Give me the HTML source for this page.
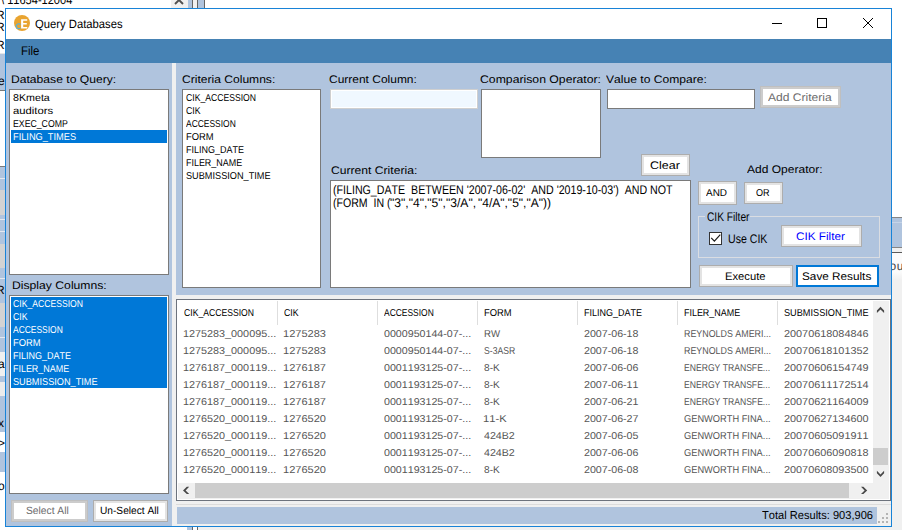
<!DOCTYPE html>
<html><head><meta charset="utf-8"><title>Query Databases</title>
<style>
*{box-sizing:border-box;margin:0;padding:0}
html,body{width:902px;height:530px;overflow:hidden;background:#fff}
body{position:relative;font-family:"Liberation Sans",sans-serif;font-kerning:none;text-rendering:geometricPrecision}
.a{position:absolute}
.t{position:absolute;white-space:pre;line-height:16px;height:16px;transform-origin:0 50%}
.lb{position:absolute;background:#fff;border:1px solid #7a7a7a}
.sel{position:absolute;background:#0078d7}
.btn{position:absolute;background:#fff;border:1px solid #adadad;box-shadow:inset 0 0 0 2px #e3e3e3}
.btn.dis{border-color:#bfbfbf;box-shadow:inset 0 0 0 2px #cccccc}
.btn.def{border:2px solid #0078d7;box-shadow:none}
</style></head><body>

<!-- ===== background application fragments ===== -->
<div class="a" style="left:0;top:0;width:902px;height:8px;background:#fff"></div>
<div class="a" style="left:171px;top:0;width:17px;height:8px;background:#f0f0f0"></div>
<svg class="a" style="left:174px;top:-1px" width="10" height="6" viewBox="0 0 10 6"><path d="M1 5 L5 1 L9 5" fill="none" stroke="#505050" stroke-width="1.9"/></svg>
<div class="a" style="left:188px;top:0;width:5px;height:8px;background:#b0c4de;border-right:1px solid #646464"></div>
<div class="a" style="left:193px;top:0;width:5px;height:8px;background:#f0f0f0;border-right:1px solid #646464"></div>
<div class="a" style="left:198px;top:0;width:7px;height:8px;background:#b0c4de;border-right:1px solid #646464"></div>
<!-- left strip -->
<div class="a" id="lstrip" style="left:0;top:8px;width:5px;height:519px;background:linear-gradient(to bottom,#fff 0px,#fff 45px,#e6e6e6 45px,#e6e6e6 46px,#b0c4de 46px,#b0c4de 82px,#7a7a7a 82px,#7a7a7a 83px,#fff 83px,#fff 158px,#7a7a7a 158px,#7a7a7a 159px,#b0c4de 159px,#b0c4de 170px,#e4e8f0 170px,#e4e8f0 171px,#b0c4de 171px,#b0c4de 182px,#d3d3d3 182px,#d3d3d3 207px,#b0c4de 207px,#b0c4de 211px,#e4e8f0 211px,#e4e8f0 212px,#b0c4de 212px,#b0c4de 223px,#e4e8f0 223px,#e4e8f0 224px,#b0c4de 224px,#b0c4de 236px,#d3d3d3 236px,#d3d3d3 260px,#b0c4de 260px,#b0c4de 270px,#e4e8f0 270px,#e4e8f0 271px,#b0c4de 271px,#b0c4de 295px,#d3d3d3 295px,#d3d3d3 319px,#b0c4de 319px,#b0c4de 329px,#e4e8f0 329px,#e4e8f0 330px,#b0c4de 330px,#b0c4de 344px,#f0f0f0 344px,#f0f0f0 368px,#b0c4de 368px,#b0c4de 374px,#ececec 374px,#ececec 388px,#b0c4de 388px,#b0c4de 424px,#fff 424px,#fff 444px,#b0c4de 444px,#b0c4de 464px,#fff 464px,#fff 519px)"></div>
<span class="t" style="left:-4px;top:7px;font-size:12px">R</span>
<span class="t" style="left:-4px;top:19px;font-size:12px">R</span>
<span class="t" style="left:-4px;top:37px;font-size:12px">R</span>
<span class="t" style="left:-2px;top:73px;font-size:12px">e</span>
<span class="t" style="left:-4px;top:282px;font-size:12px">R</span>
<span class="t" style="left:-2px;top:356px;font-size:12px">a</span>
<span class="t" style="left:-2px;top:415px;font-size:12px">x</span>
<span class="t" style="left:-2px;top:435px;font-size:12px">&gt;</span>
<span class="t" style="left:-2px;top:478px;font-size:12px">o</span>
<!-- right strip -->
<div class="a" style="left:892px;top:8px;width:10px;height:522px;background:linear-gradient(to bottom,
#fff 0,#fff 209px,#858585 209px,#858585 210px,#b0c4de 210px,#b0c4de 214px,#c6d4e8 214px,#c6d4e8 215px,#b0c4de 215px,#b0c4de 239px,#858585 239px,#858585 240px,#f0f0f0 240px,#f0f0f0 244px,#5a5a5a 244px,#5a5a5a 245px,#fbfbfb 245px,#fbfbfb 264px,#f0f0f0 272px,#f0f0f0 522px)"></div>
<span class="t" style="left:889.5px;top:258px;font-size:12px;color:#444;letter-spacing:0.5px">ou</span>
<!-- bottom strip -->
<div class="a" style="left:0;top:527px;width:902px;height:3px;background:#fff"></div>
<div class="a" style="left:198px;top:527px;width:704px;height:3px;background:#f0f0f0"></div>
<div class="a" style="left:187px;top:527px;width:6px;height:3px;background:#b0c4de;border-right:1px solid #646464"></div>
<div class="a" style="left:197px;top:527px;width:1px;height:3px;background:#646464"></div>

<!-- ===== window ===== -->
<div class="a" style="left:5px;top:8px;width:887px;height:519px;border:1px solid #1883d7;background:#b0c4de"></div>
<div class="a" style="left:6px;top:9px;width:885px;height:30px;background:#fff"></div>
<div class="a" style="left:6px;top:39px;width:885px;height:24px;background:#4682b4"></div>
<!-- icon -->
<svg class="a" style="left:14px;top:15px" width="16" height="16" viewBox="0 0 16 16">
<circle cx="8" cy="8" r="8" fill="#e9a430"/>
<path d="M7.1 4.2h6.1v1.6H9.2v2.2h3.6v1.5H9.2v2.5h4.1v1.6H7.1z" fill="#fff"/>
<path d="M6.4 9.6a2.3 2.4 0 1 0 0 3.2" fill="none" stroke="#4fb3e6" stroke-width="1.1"/>
</svg>
<!-- caption buttons -->
<svg class="a" style="left:760px;top:9px" width="131" height="30" viewBox="0 0 131 30" shape-rendering="crispEdges">
<path d="M12 14.5h10" stroke="#000" stroke-width="1"/>
<rect x="57.5" y="9.5" width="9" height="9" fill="none" stroke="#000" stroke-width="1"/>
<path d="M103 9 L113 19 M113 9 L103 19" stroke="#000" stroke-width="1" shape-rendering="geometricPrecision"/>
</svg>

<!-- splitters -->
<div class="a" style="left:172px;top:63px;width:4px;height:463px;background:#f0f0f0"></div>
<div class="a" style="left:176px;top:295px;width:715px;height:4px;background:#f0f0f0"></div>
<div class="a" style="left:176px;top:501px;width:715px;height:25px;background:#f0f0f0"></div>

<!-- left panel -->
<div class="lb" style="left:9px;top:89px;width:160px;height:186px"></div>
<div class="sel" style="left:11px;top:130px;width:156px;height:13px"></div>
<div class="lb" style="left:9px;top:295px;width:160px;height:199px"></div>
<div class="sel" style="left:11px;top:297px;width:156px;height:91px"></div>
<div class="btn dis" style="left:11px;top:500px;width:77px;height:22px"></div>
<div class="btn" style="left:93px;top:500px;width:75px;height:22px"></div>

<!-- top right panel -->
<div class="lb" style="left:182px;top:89px;width:139px;height:199px"></div>
<div class="a" style="left:330px;top:89px;width:148px;height:20px;background:#f0f8ff;border:1px solid #cfcfcf;box-shadow:inset 0 0 0 1px #fff"></div>
<div class="lb" style="left:481px;top:89px;width:120px;height:69px"></div>
<div class="lb" style="left:607px;top:89px;width:148px;height:20px"></div>
<div class="btn dis" style="left:760px;top:86px;width:81px;height:22px"></div>
<div class="btn" style="left:641px;top:154px;width:49px;height:22px"></div>
<div class="lb" style="left:330px;top:180px;width:361px;height:108px"></div>
<div class="btn" style="left:698px;top:181px;width:39px;height:24px"></div>
<div class="btn" style="left:744px;top:182px;width:39px;height:22px"></div>
<!-- group box -->
<div class="a" style="left:698px;top:216px;width:182px;height:42px;border:1px solid #dadde2"></div>
<div class="a" style="left:705px;top:214px;width:45px;height:5px;background:#b0c4de"></div>
<div class="a" style="left:709px;top:232px;width:13px;height:13px;background:#fff;border:1px solid #333"></div>
<svg class="a" style="left:709px;top:232px" width="13" height="13" viewBox="0 0 13 13"><path d="M2.2 5.8 L5.4 9.2 L11.3 2.6" fill="none" stroke="#1a1a1a" stroke-width="1.2"/></svg>
<div class="btn" style="left:781px;top:225px;width:81px;height:22px"></div>
<div class="btn" style="left:699px;top:265px;width:94px;height:22px"></div>
<div class="btn def" style="left:796px;top:265px;width:83px;height:22px"></div>

<!-- data grid -->
<div class="lb" style="left:176px;top:299px;width:715px;height:202px;border-color:#6d737d"></div>
<div class="a" style="left:277px;top:301px;width:1px;height:24px;background:#dedede"></div>
<div class="a" style="left:377px;top:301px;width:1px;height:24px;background:#dedede"></div>
<div class="a" style="left:477px;top:301px;width:1px;height:24px;background:#dedede"></div>
<div class="a" style="left:577px;top:301px;width:1px;height:24px;background:#dedede"></div>
<div class="a" style="left:677px;top:301px;width:1px;height:24px;background:#dedede"></div>
<div class="a" style="left:777px;top:301px;width:1px;height:24px;background:#dedede"></div>
<!-- v scrollbar -->
<div class="a" style="left:873px;top:301px;width:16px;height:198px;background:#f0f0f0"></div>
<div class="a" style="left:873px;top:448px;width:15px;height:17px;background:#cdcdcd"></div>
<!-- h scrollbar -->
<div class="a" style="left:178px;top:483px;width:695px;height:16px;background:#f0f0f0"></div>
<div class="a" style="left:195px;top:483px;width:654px;height:15px;background:#cdcdcd"></div>
<svg class="a" style="left:0;top:0" width="902" height="530" viewBox="0 0 902 530"><g fill="#484848">
<polygon points="880.5,306.8 884.1,310.6 884.1,313 880.5,309.4 876.9,313 876.9,310.6"/>
<polygon points="880.5,477 884.1,473.2 884.1,470.8 880.5,474.4 876.9,470.8 876.9,473.2"/>
<polygon points="183,490.4 186.8,486.8 189.2,486.8 185.6,490.4 189.2,494 186.8,494"/>
<polygon points="867.2,490.4 863.4,486.8 861,486.8 864.6,490.4 861,494 863.4,494"/>
</g></svg>

<!-- status bar -->
<div class="a" style="left:176px;top:504px;width:715px;height:1px;background:#dcdcdc"></div>
<div class="a" style="left:177px;top:507px;width:700px;height:17px;background:#b0c4de"></div>
<svg class="a" style="left:878px;top:512px" width="12" height="12" viewBox="0 0 12 12" shape-rendering="crispEdges">
<g fill="#b4b4b4"><rect x="8" y="1" width="2" height="2"/><rect x="8" y="5" width="2" height="2"/><rect x="4" y="5" width="2" height="2"/><rect x="8" y="9" width="2" height="2"/><rect x="4" y="9" width="2" height="2"/><rect x="0" y="9" width="2" height="2"/></g></svg>

<!-- ===== text ===== -->
<span class="t" id="t0" style="left:1.45px;top:-8px;font-size:12px;transform:scaleX(0.9211);">\ 11654-12004</span>
<span class="t" id="t1" style="left:34.84px;top:16px;font-size:12px;transform:scaleX(0.9376);">Query Databases</span>
<span class="t" id="t2" style="left:21.05px;top:43px;font-size:12.5px;transform:scaleX(0.9158);">File</span>
<span class="t" id="t3" style="left:10.94px;top:72px;font-size:11px;transform:scaleX(1.1021);">Database to Query:</span>
<span class="t" id="t4" style="left:181.64px;top:72px;font-size:11px;transform:scaleX(1.0976);">Criteria Columns:</span>
<span class="t" id="t5" style="left:329.35px;top:72px;font-size:11px;transform:scaleX(1.0886);">Current Column:</span>
<span class="t" id="t6" style="left:480.33px;top:72px;font-size:11px;transform:scaleX(1.1121);">Comparison Operator:</span>
<span class="t" id="t7" style="left:606.34px;top:72px;font-size:11px;transform:scaleX(1.1000);">Value to Compare:</span>
<span class="t" id="t8" style="left:330.64px;top:163px;font-size:11px;transform:scaleX(1.1026);">Current Criteria:</span>
<span class="t" id="t9" style="left:747.14px;top:162px;font-size:11px;transform:scaleX(1.0926);">Add Operator:</span>
<span class="t" id="t10" style="left:11.94px;top:278px;font-size:11px;transform:scaleX(1.1071);">Display Columns:</span>
<span class="t" id="t11" style="left:12.56px;top:91px;font-size:10px;transform:scaleX(1.0676);">8Kmeta</span>
<span class="t" id="t12" style="left:12.52px;top:104px;font-size:10px;transform:scaleX(1.1257);">auditors</span>
<span class="t" id="t13" style="left:12.68px;top:117px;font-size:10px;transform:scaleX(0.8726);">EXEC_COMP</span>
<span class="t" id="t14" style="left:12.65px;top:130px;font-size:10px;color:#fff;transform:scaleX(0.9224);">FILING_TIMES</span>
<span class="t" id="t15" style="left:185.68px;top:91px;font-size:10px;transform:scaleX(0.8625);">CIK_ACCESSION</span>
<span class="t" id="t16" style="left:185.67px;top:104px;font-size:10px;transform:scaleX(0.8750);">CIK</span>
<span class="t" id="t17" style="left:185.69px;top:117px;font-size:10px;transform:scaleX(0.8448);">ACCESSION</span>
<span class="t" id="t18" style="left:185.64px;top:130px;font-size:10px;transform:scaleX(0.9393);">FORM</span>
<span class="t" id="t19" style="left:185.66px;top:143px;font-size:10px;transform:scaleX(0.8984);">FILING_DATE</span>
<span class="t" id="t20" style="left:185.66px;top:156px;font-size:10px;transform:scaleX(0.8935);">FILER_NAME</span>
<span class="t" id="t21" style="left:185.65px;top:169px;font-size:10px;transform:scaleX(0.9176);">SUBMISSION_TIME</span>
<span class="t" id="t22" style="left:13.28px;top:297px;font-size:10px;color:#fff;transform:scaleX(0.8625);">CIK_ACCESSION</span>
<span class="t" id="t23" style="left:13.28px;top:310px;font-size:10px;color:#fff;transform:scaleX(0.8750);">CIK</span>
<span class="t" id="t24" style="left:13.29px;top:323px;font-size:10px;color:#fff;transform:scaleX(0.8448);">ACCESSION</span>
<span class="t" id="t25" style="left:13.24px;top:336px;font-size:10px;color:#fff;transform:scaleX(0.9393);">FORM</span>
<span class="t" id="t26" style="left:13.26px;top:349px;font-size:10px;color:#fff;transform:scaleX(0.8984);">FILING_DATE</span>
<span class="t" id="t27" style="left:13.26px;top:362px;font-size:10px;color:#fff;transform:scaleX(0.8935);">FILER_NAME</span>
<span class="t" id="t28" style="left:13.25px;top:375px;font-size:10px;color:#fff;transform:scaleX(0.9176);">SUBMISSION_TIME</span>
<span class="t" id="t29" style="left:768.14px;top:90px;font-size:11px;color:#6d6d6d;transform:scaleX(1.0965);">Add Criteria</span>
<span class="t" id="t30" style="left:650.22px;top:158px;font-size:11px;transform:scaleX(1.1360);">Clear</span>
<span class="t" id="t31" style="left:706.40px;top:186px;font-size:10px;transform:scaleX(0.9950);">AND</span>
<span class="t" id="t32" style="left:755.56px;top:186px;font-size:10px;transform:scaleX(0.9071);">OR</span>
<span class="t" id="t33" style="left:796.36px;top:229px;font-size:11px;color:#0000ff;transform:scaleX(1.0667);">CIK Filter</span>
<span class="t" id="t34" style="left:724.89px;top:269px;font-size:11px;transform:scaleX(1.0205);">Execute</span>
<span class="t" id="t35" style="left:801.56px;top:269px;font-size:11px;transform:scaleX(1.0687);">Save Results</span>
<span class="t" id="t36" style="left:26.41px;top:503px;font-size:10.5px;color:#6d6d6d;transform:scaleX(0.9767);">Select All</span>
<span class="t" id="t37" style="left:99.92px;top:503px;font-size:10.5px;transform:scaleX(0.9667);">Un-Select All</span>
<span class="t" id="t38" style="left:706.91px;top:209px;font-size:12.5px;transform:scaleX(0.8157);">CIK Filter</span>
<span class="t" id="t39" style="left:728.29px;top:231px;font-size:12.5px;transform:scaleX(0.8467);">Use CIK</span>
<span class="t" id="t40" style="left:332.89px;top:182px;font-size:12.5px;transform:scaleX(0.8520);">(FILING_DATE  BETWEEN &#x27;2007-06-02&#x27;  AND &#x27;2019-10-03&#x27;)  AND NOT</span>
<span class="t" id="t41" style="left:332.79px;top:195px;font-size:12.5px;transform:scaleX(0.8448);">(FORM  IN (</span>
<span class="t" id="t42" style="left:389.92px;top:195px;font-size:12.5px;transform:scaleX(0.9667);">&quot;3&quot;,&quot;4&quot;,&quot;5&quot;,&quot;3/A&quot;,</span>
<span class="t" id="t43" style="left:478.02px;top:195px;font-size:12.5px;transform:scaleX(0.9600);">&quot;4/A&quot;,&quot;5&quot;,&quot;A&quot;))</span>
<span class="t" id="t44" style="left:761.92px;top:508px;font-size:11.5px;transform:scaleX(0.9649);">Total Results: 903,906</span>
<span class="t" id="t45" style="left:183.78px;top:306px;font-size:10px;transform:scaleX(0.8625);">CIK_ACCESSION</span>
<span class="t" id="t46" style="left:283.78px;top:306px;font-size:10px;transform:scaleX(0.8750);">CIK</span>
<span class="t" id="t47" style="left:383.79px;top:306px;font-size:10px;transform:scaleX(0.8448);">ACCESSION</span>
<span class="t" id="t48" style="left:483.74px;top:306px;font-size:10px;transform:scaleX(0.9393);">FORM</span>
<span class="t" id="t49" style="left:583.76px;top:306px;font-size:10px;transform:scaleX(0.8984);">FILING_DATE</span>
<span class="t" id="t50" style="left:683.76px;top:306px;font-size:10px;transform:scaleX(0.8935);">FILER_NAME</span>
<span class="t" id="t51" style="left:783.75px;top:306px;font-size:10px;transform:scaleX(0.9176);">SUBMISSION_TIME</span>
<span class="t" id="t52" style="left:182.57px;top:327px;font-size:10px;color:#555;transform:scaleX(1.0810);">1275283_000095...</span>
<span class="t" id="t53" style="left:282.54px;top:327px;font-size:10px;color:#555;transform:scaleX(1.1027);">1275283</span>
<span class="t" id="t54" style="left:383.66px;top:327px;font-size:10px;color:#555;transform:scaleX(1.0663);">0000950144-07-...</span>
<span class="t" id="t55" style="left:483.72px;top:327px;font-size:10px;color:#555;transform:scaleX(0.9625);">RW</span>
<span class="t" id="t56" style="left:583.66px;top:327px;font-size:10px;color:#555;transform:scaleX(1.0640);">2007-06-18</span>
<span class="t" id="t57" style="left:683.77px;top:327px;font-size:10px;color:#555;transform:scaleX(0.8885);">REYNOLDS AMERI...</span>
<span class="t" id="t58" style="left:783.65px;top:327px;font-size:10px;color:#555;transform:scaleX(1.0857);">20070618084846</span>
<span class="t" id="t59" style="left:182.57px;top:344px;font-size:10px;color:#555;transform:scaleX(1.0810);">1275283_000095...</span>
<span class="t" id="t60" style="left:282.54px;top:344px;font-size:10px;color:#555;transform:scaleX(1.1027);">1275283</span>
<span class="t" id="t61" style="left:383.66px;top:344px;font-size:10px;color:#555;transform:scaleX(1.0663);">0000950144-07-...</span>
<span class="t" id="t62" style="left:483.78px;top:344px;font-size:10px;color:#555;transform:scaleX(0.8657);">S-3ASR</span>
<span class="t" id="t63" style="left:583.66px;top:344px;font-size:10px;color:#555;transform:scaleX(1.0640);">2007-06-18</span>
<span class="t" id="t64" style="left:683.77px;top:344px;font-size:10px;color:#555;transform:scaleX(0.8885);">REYNOLDS AMERI...</span>
<span class="t" id="t65" style="left:783.65px;top:344px;font-size:10px;color:#555;transform:scaleX(1.0857);">20070618101352</span>
<span class="t" id="t66" style="left:182.57px;top:361px;font-size:10px;color:#555;transform:scaleX(1.0810);">1276187_000119...</span>
<span class="t" id="t67" style="left:282.54px;top:361px;font-size:10px;color:#555;transform:scaleX(1.1027);">1276187</span>
<span class="t" id="t68" style="left:383.66px;top:361px;font-size:10px;color:#555;transform:scaleX(1.0663);">0001193125-07-...</span>
<span class="t" id="t69" style="left:483.69px;top:361px;font-size:10px;color:#555;transform:scaleX(1.0133);">8-K</span>
<span class="t" id="t70" style="left:583.66px;top:361px;font-size:10px;color:#555;transform:scaleX(1.0640);">2007-06-06</span>
<span class="t" id="t71" style="left:683.78px;top:361px;font-size:10px;color:#555;transform:scaleX(0.8602);">ENERGY TRANSFE...</span>
<span class="t" id="t72" style="left:783.65px;top:361px;font-size:10px;color:#555;transform:scaleX(1.0857);">20070606154749</span>
<span class="t" id="t73" style="left:182.57px;top:378px;font-size:10px;color:#555;transform:scaleX(1.0810);">1276187_000119...</span>
<span class="t" id="t74" style="left:282.54px;top:378px;font-size:10px;color:#555;transform:scaleX(1.1027);">1276187</span>
<span class="t" id="t75" style="left:383.66px;top:378px;font-size:10px;color:#555;transform:scaleX(1.0663);">0001193125-07-...</span>
<span class="t" id="t76" style="left:483.69px;top:378px;font-size:10px;color:#555;transform:scaleX(1.0133);">8-K</span>
<span class="t" id="t77" style="left:583.66px;top:378px;font-size:10px;color:#555;transform:scaleX(1.0640);">2007-06-11</span>
<span class="t" id="t78" style="left:683.78px;top:378px;font-size:10px;color:#555;transform:scaleX(0.8602);">ENERGY TRANSFE...</span>
<span class="t" id="t79" style="left:783.65px;top:378px;font-size:10px;color:#555;transform:scaleX(1.0857);">20070611172514</span>
<span class="t" id="t80" style="left:182.57px;top:395px;font-size:10px;color:#555;transform:scaleX(1.0810);">1276187_000119...</span>
<span class="t" id="t81" style="left:282.54px;top:395px;font-size:10px;color:#555;transform:scaleX(1.1027);">1276187</span>
<span class="t" id="t82" style="left:383.66px;top:395px;font-size:10px;color:#555;transform:scaleX(1.0663);">0001193125-07-...</span>
<span class="t" id="t83" style="left:483.69px;top:395px;font-size:10px;color:#555;transform:scaleX(1.0133);">8-K</span>
<span class="t" id="t84" style="left:583.66px;top:395px;font-size:10px;color:#555;transform:scaleX(1.0640);">2007-06-21</span>
<span class="t" id="t85" style="left:683.78px;top:395px;font-size:10px;color:#555;transform:scaleX(0.8602);">ENERGY TRANSFE...</span>
<span class="t" id="t86" style="left:783.65px;top:395px;font-size:10px;color:#555;transform:scaleX(1.0857);">20070621164009</span>
<span class="t" id="t87" style="left:182.57px;top:412px;font-size:10px;color:#555;transform:scaleX(1.0810);">1276520_000119...</span>
<span class="t" id="t88" style="left:282.54px;top:412px;font-size:10px;color:#555;transform:scaleX(1.1027);">1276520</span>
<span class="t" id="t89" style="left:383.66px;top:412px;font-size:10px;color:#555;transform:scaleX(1.0663);">0001193125-07-...</span>
<span class="t" id="t90" style="left:482.51px;top:412px;font-size:10px;color:#555;transform:scaleX(1.1158);">11-K</span>
<span class="t" id="t91" style="left:583.66px;top:412px;font-size:10px;color:#555;transform:scaleX(1.0640);">2007-06-27</span>
<span class="t" id="t92" style="left:683.74px;top:412px;font-size:10px;color:#555;transform:scaleX(0.9272);">GENWORTH FINA...</span>
<span class="t" id="t93" style="left:783.65px;top:412px;font-size:10px;color:#555;transform:scaleX(1.0857);">20070627134600</span>
<span class="t" id="t94" style="left:182.57px;top:429px;font-size:10px;color:#555;transform:scaleX(1.0810);">1276520_000119...</span>
<span class="t" id="t95" style="left:282.54px;top:429px;font-size:10px;color:#555;transform:scaleX(1.1027);">1276520</span>
<span class="t" id="t96" style="left:383.66px;top:429px;font-size:10px;color:#555;transform:scaleX(1.0663);">0001193125-07-...</span>
<span class="t" id="t97" style="left:483.66px;top:429px;font-size:10px;color:#555;transform:scaleX(1.0643);">424B2</span>
<span class="t" id="t98" style="left:583.66px;top:429px;font-size:10px;color:#555;transform:scaleX(1.0640);">2007-06-05</span>
<span class="t" id="t99" style="left:683.74px;top:429px;font-size:10px;color:#555;transform:scaleX(0.9272);">GENWORTH FINA...</span>
<span class="t" id="t100" style="left:783.65px;top:429px;font-size:10px;color:#555;transform:scaleX(1.0857);">20070605091911</span>
<span class="t" id="t101" style="left:182.57px;top:446px;font-size:10px;color:#555;transform:scaleX(1.0810);">1276520_000119...</span>
<span class="t" id="t102" style="left:282.54px;top:446px;font-size:10px;color:#555;transform:scaleX(1.1027);">1276520</span>
<span class="t" id="t103" style="left:383.66px;top:446px;font-size:10px;color:#555;transform:scaleX(1.0663);">0001193125-07-...</span>
<span class="t" id="t104" style="left:483.66px;top:446px;font-size:10px;color:#555;transform:scaleX(1.0643);">424B2</span>
<span class="t" id="t105" style="left:583.66px;top:446px;font-size:10px;color:#555;transform:scaleX(1.0640);">2007-06-06</span>
<span class="t" id="t106" style="left:683.74px;top:446px;font-size:10px;color:#555;transform:scaleX(0.9272);">GENWORTH FINA...</span>
<span class="t" id="t107" style="left:783.65px;top:446px;font-size:10px;color:#555;transform:scaleX(1.0857);">20070606090818</span>
<span class="t" id="t108" style="left:182.57px;top:463px;font-size:10px;color:#555;transform:scaleX(1.0810);">1276520_000119...</span>
<span class="t" id="t109" style="left:282.54px;top:463px;font-size:10px;color:#555;transform:scaleX(1.1027);">1276520</span>
<span class="t" id="t110" style="left:383.66px;top:463px;font-size:10px;color:#555;transform:scaleX(1.0663);">0001193125-07-...</span>
<span class="t" id="t111" style="left:483.69px;top:463px;font-size:10px;color:#555;transform:scaleX(1.0133);">8-K</span>
<span class="t" id="t112" style="left:583.66px;top:463px;font-size:10px;color:#555;transform:scaleX(1.0640);">2007-06-08</span>
<span class="t" id="t113" style="left:683.74px;top:463px;font-size:10px;color:#555;transform:scaleX(0.9272);">GENWORTH FINA...</span>
<span class="t" id="t114" style="left:783.65px;top:463px;font-size:10px;color:#555;transform:scaleX(1.0857);">20070608093500</span>
</body></html>
